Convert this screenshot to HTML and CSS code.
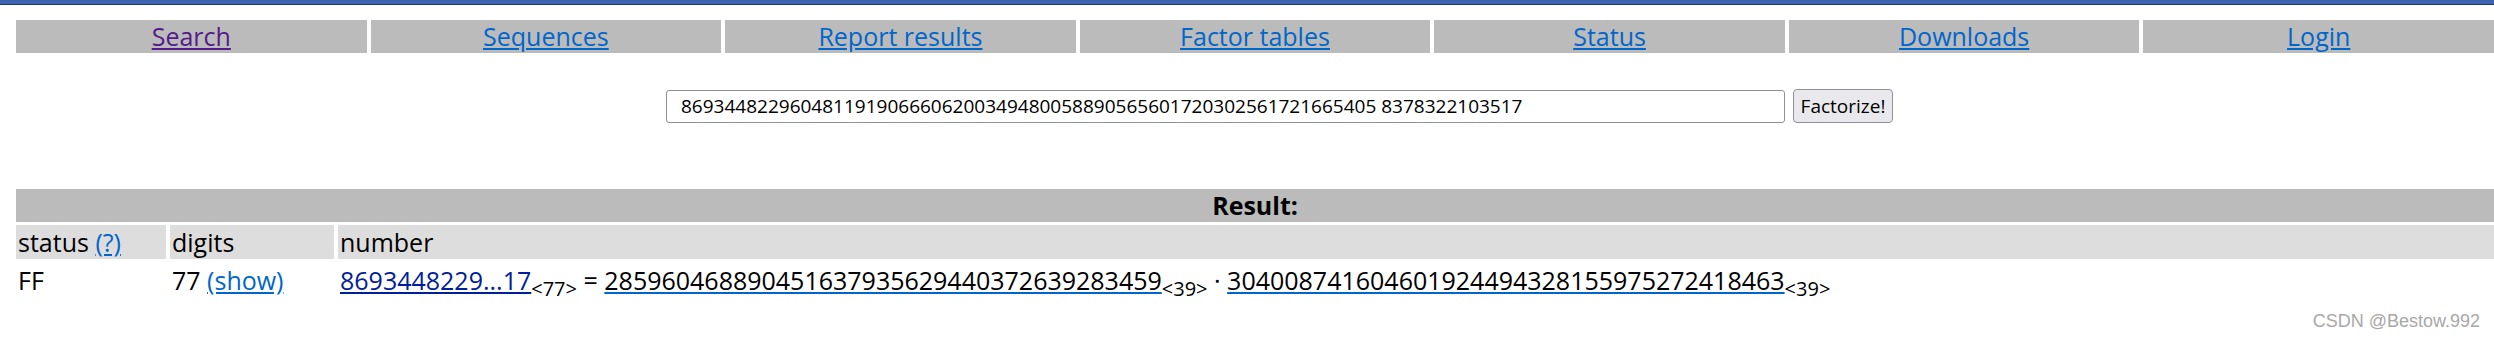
FILE: index.html
```html
<!DOCTYPE html>
<html>
<head>
  <meta charset="UTF-8">
  <title>factordb.com</title>
  <link rel="stylesheet" href="styles.css">
</head>
<body>
  <div class="topbar"></div>
  <div class="page">
    <div class="nav">
      <div class="nav-item"><a class="visited" href="#">Search</a></div>
      <div class="nav-item"><a href="#">Sequences</a></div>
      <div class="nav-item"><a href="#">Report results</a></div>
      <div class="nav-item"><a href="#">Factor tables</a></div>
      <div class="nav-item"><a href="#">Status</a></div>
      <div class="nav-item"><a href="#">Downloads</a></div>
      <div class="nav-item"><a href="#">Login</a></div>
    </div>

    <form class="search-form">
      <input class="query" type="text" value="8693448229604811919066606200349480058890565601720302561721665405 8378322103517">
      <button class="submit" type="button">Factorize!</button>
    </form>

    <div class="result">
      <div class="result-title">Result:</div>
      <div class="cell head">status <a href="#">(?)</a></div>
      <div class="cell head">digits</div>
      <div class="cell head">number</div>
      <div class="cell">FF</div>
      <div class="cell">77 <a href="#">(show)</a></div>
      <div class="cell">
        <a class="number" href="#">8693448229...17</a><sub>&lt;77&gt;</sub> =
        <a class="factor" href="#">285960468890451637935629440372639283459</a><sub>&lt;39&gt;</sub> ·
        <a class="factor" href="#">304008741604601924494328155975272418463</a><sub>&lt;39&gt;</sub>
      </div>
    </div>
  </div>
  <div class="watermark">CSDN @Bestow.992</div>
</body>
</html>
```

FILE: styles.css
```css
body {
  font-family: "Open Sans", "Noto Sans", sans-serif;
  font-size: 25px;
  margin: 0;
  background-color: white;
  color: black;
}

a {
  color: #0066cc;
}

a.visited {
  color: #551a8b;
}

.topbar {
  height: 4px;
  background-color: #3d63b3;
  border-bottom: 1px solid #1c3a72;
}

.page {
  padding: 15px 0 0 16px;
}

.nav {
  display: grid;
  grid-template-columns: repeat(7, 1fr);
  column-gap: 4px;
}

.nav-item {
  background-color: #bbbbbb;
  text-align: center;
  line-height: 33px;
  height: 33px;
}

.search-form {
  display: flex;
  justify-content: center;
  align-items: center;
  gap: 8px;
  margin: 36px 0 0 0;
  padding-left: 49px;
}

.query {
  box-sizing: border-box;
  width: 1119px;
  height: 33px;
  padding: 0 0 0 14px;
  border: 1px solid #8f8f9d;
  border-radius: 3px;
  font-family: "Open Sans", sans-serif;
  font-size: 19px;
  color: black;
}

.submit {
  box-sizing: border-box;
  width: 100px;
  height: 34px;
  padding: 0;
  background-color: #e9e9ed;
  border: 1px solid #8f8f9d;
  border-radius: 4px;
  font-family: "Open Sans", sans-serif;
  font-size: 19px;
  color: black;
}

.result {
  display: grid;
  grid-template-columns: 150px 164px 1fr;
  column-gap: 4px;
  row-gap: 3px;
  margin-top: 66px;
}

.result-title {
  grid-column: 1 / -1;
  background-color: #bbbbbb;
  text-align: center;
  font-weight: bold;
  line-height: 33px;
}

.cell {
  padding: 0 2px;
  line-height: 36px;
  white-space: nowrap;
}

.cell.head {
  background-color: #dddddd;
  line-height: 34px;
}

.number {
  color: #002099;
}

.factor {
  color: black;
  text-decoration-color: #0066cc;
}

sub {
  font-size: 20px;
  line-height: 0;
}

.watermark {
  position: absolute;
  right: 14px;
  top: 311px;
  font-family: "Liberation Sans", sans-serif;
  font-size: 18px;
  color: #a8a8a8;
}
```
